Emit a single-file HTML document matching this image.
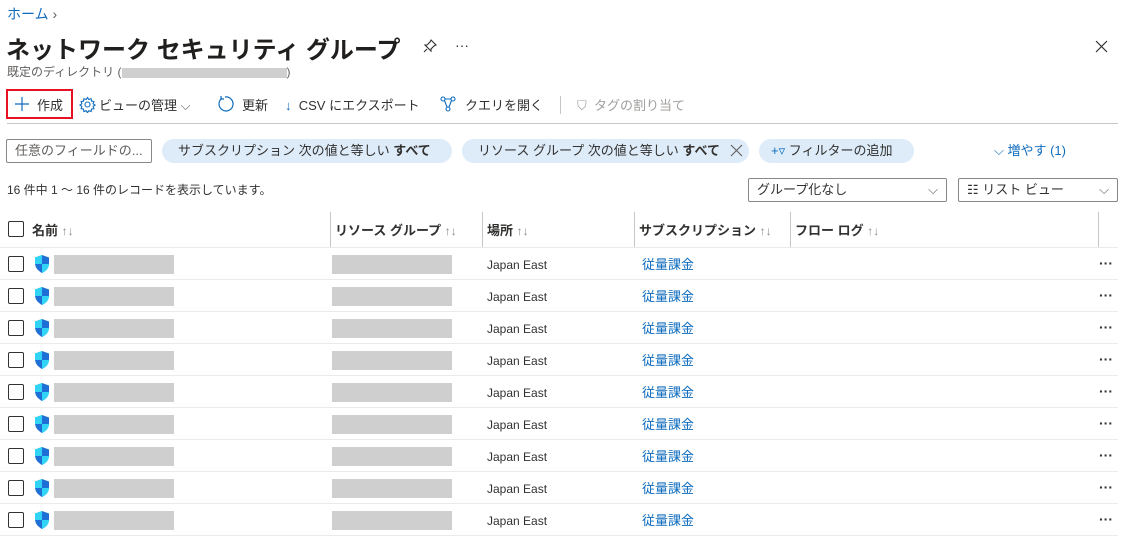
<!DOCTYPE html><html><head><meta charset="utf-8"><style>
*{box-sizing:border-box;margin:0;padding:0}
body{width:1126px;height:545px;overflow:hidden;background:#fff;font-family:"Liberation Sans","Noto Sans CJK JP",sans-serif;color:#323130;position:relative;font-size:13px}
.a{position:absolute;white-space:nowrap}
.blue{color:#0f6cbd}
.pill{position:absolute;height:24px;top:139px;background:#deecf9;border-radius:12px;font-size:13px;line-height:24px;padding:0 16px;white-space:nowrap}
.cb{position:absolute;width:16px;height:16px;border:1px solid #323130;border-radius:2px;left:8px}
.gray{position:absolute;background:#cfcfcf;height:19px;width:120px}
.hl{position:absolute;left:0;width:1118px;height:1px;background:#edebe9}
.vl{position:absolute;top:212px;width:1px;height:35px;background:#c8c6c4}
.h{font-weight:bold}
.sort{color:#8a8886;font-weight:normal;font-size:12px}
</style></head><body>
<div class="a blue" style="left:7px;top:4px;font-size:14px">ホーム <span style="color:#605e5c">›</span></div>
<div class="a" style="left:6px;top:30px;font-size:24px;font-weight:bold;color:#201f1e">ネットワーク セキュリティ グループ</div>
<div class="a" style="left:422px;top:38px">
<svg width="16" height="16" viewBox="0 0 16 16" fill="none" stroke="#323130" stroke-width="1.1"><path d="M9 2l5 5-2 1-3 3 0 2-6-6 2 0 3-3z M5 11l-3 3"/></svg></div>
<div class="a" style="left:455px;top:37px;font-size:14px">···</div>
<svg class="a" style="left:1095px;top:40px" width="13" height="13" viewBox="0 0 13 13" stroke="#323130" stroke-width="1.2"><path d="M1 1l11 11M12 1L1 12"/></svg>
<div class="a" style="left:7px;top:63px;font-size:12px;color:#605e5c">既定のディレクトリ (<span style="display:inline-block;width:165px;height:10px;background:#cfcfcf;vertical-align:middle"></span>)</div>
<div class="a" style="left:6px;top:89px;width:67px;height:30px;border:2px solid #e81123"></div>
<svg class="a" style="left:14px;top:96px" width="16" height="16" viewBox="0 0 16 16" stroke="#0f6cbd" stroke-width="1.2"><path d="M8 1v14M1 8h14"/></svg>
<div class="a" style="left:37px;top:95px;font-size:13px">作成</div>
<svg class="a" style="left:79px;top:96px" width="17" height="17" viewBox="0 0 17 17" fill="none" stroke="#0f6cbd" stroke-width="1.1"><circle cx="8.5" cy="8.5" r="2.5"/><path d="M8.5 1.5l1.3 2 2.3-.8.4 2.4 2.4.4-.8 2.3 2 1.3-2 1.3.8 2.3-2.4.4-.4 2.4-2.3-.8-1.3 2-1.3-2-2.3.8-.4-2.4-2.4-.4.8-2.3-2-1.3 2-1.3-.8-2.3 2.4-.4.4-2.4 2.3.8z"/></svg>
<div class="a" style="left:99px;top:95px;font-size:13px">ビューの管理 <span style="color:#605e5c">⌵</span></div>
<svg class="a" style="left:216px;top:95px" width="18" height="18" viewBox="0 0 18 18" fill="none" stroke="#0f6cbd" stroke-width="1.2"><path d="M6 3.2A7 7 0 1 0 9 2"/><path d="M5 1v3h3"/></svg>
<div class="a" style="left:242px;top:95px;font-size:13px">更新</div>
<div class="a" style="left:285px;top:95px;font-size:13px"><span class="blue">↓</span>&nbsp; CSV にエクスポート</div>
<svg class="a" style="left:440px;top:96px" width="16" height="16" viewBox="0 0 16 16" fill="none" stroke="#0f6cbd" stroke-width="1.1"><circle cx="3" cy="3" r="2"/><circle cx="13" cy="3" r="2"/><circle cx="8" cy="13" r="2"/><path d="M4.5 4.5L7 11M11.5 4.5L9 11M5 3h6"/></svg>
<div class="a" style="left:465px;top:95px;font-size:13px">クエリを開く</div>
<div class="a" style="left:560px;top:96px;width:1px;height:18px;background:#c8c6c4"></div>
<div class="a" style="left:577px;top:95px;font-size:13px;color:#a19f9d">⛉ &nbsp;タグの割り当て</div>
<div class="a" style="left:7px;top:123px;width:1111px;height:1px;background:#c8c6c4"></div>
<div class="a" style="left:6px;top:139px;width:146px;height:24px;border:1px solid #8a8886;border-radius:2px;font-size:13px;line-height:22px;padding-left:8px;color:#605e5c">任意のフィールドの...</div>
<div class="pill" style="left:162px;width:290px">サブスクリプション 次の値と等しい <b>すべて</b></div>
<div class="pill" style="left:462px;width:287px">リソース グループ 次の値と等しい <b>すべて</b></div>
<svg class="a" style="left:730px;top:144px" width="13" height="13" viewBox="0 0 13 13" stroke="#605e5c" stroke-width="1.1"><path d="M1 1l11 11M12 1L1 12"/></svg>
<div class="pill" style="left:759px;width:155px;padding-left:12px"><span class="blue">+▿</span> フィルターの追加</div>
<div class="a blue" style="left:994px;top:140px;font-size:13px">⌵ 増やす (1)</div>
<div class="a" style="left:7px;top:181px;font-size:12px">16 件中 1 ～ 16 件のレコードを表示しています。</div>
<div class="a" style="left:748px;top:178px;width:199px;height:24px;border:1px solid #8a8886;border-radius:2px;line-height:22px;padding-left:8px;font-size:13px">グループ化なし<span style="position:absolute;right:8px;color:#605e5c">⌵</span></div>
<div class="a" style="left:958px;top:178px;width:160px;height:24px;border:1px solid #8a8886;border-radius:2px;line-height:22px;padding-left:8px;font-size:13px">☷ リスト ビュー<span style="position:absolute;right:8px;color:#605e5c">⌵</span></div>
<div class="cb" style="top:221px"></div>
<div class="a h" style="left:32px;top:220px">名前 <span class="sort">↑↓</span></div>
<div class="vl" style="left:330px"></div><div class="a h" style="left:335px;top:220px">リソース グループ <span class="sort">↑↓</span></div>
<div class="vl" style="left:482px"></div><div class="a h" style="left:487px;top:220px">場所 <span class="sort">↑↓</span></div>
<div class="vl" style="left:634px"></div><div class="a h" style="left:639px;top:220px">サブスクリプション <span class="sort">↑↓</span></div>
<div class="vl" style="left:790px"></div><div class="a h" style="left:795px;top:220px">フロー ログ <span class="sort">↑↓</span></div>
<div class="vl" style="left:1098px"></div>
<div class="hl" style="top:247px"></div>
<div id="rows"></div>
<script>
var h='';for(var i=0;i<9;i++){var t=248+i*32;
h+='<div class="cb" style="top:'+(t+8)+'px"></div>';
h+='<svg class="a" style="left:34px;top:'+(t+7)+'px" width="16" height="18" viewBox="0 0 16 18"><path d="M8 0L15 2.5V8c0 5-3.5 8-7 10C4.5 16 1 13 1 8V2.5z" fill="#1f6fd6"/><path d="M8 0V9H1V2.5z" fill="#32d4f5"/><path d="M8 9h7c0 4-3 7.5-7 9z" fill="#32d4f5"/></svg>';
h+='<div class="gray" style="left:54px;top:'+(t+7)+'px"></div><div class="gray" style="left:332px;top:'+(t+7)+'px"></div>';
h+='<div class="a" style="left:487px;top:'+(t+10)+'px;font-size:12px">Japan East</div>';
h+='<div class="a blue" style="left:642px;top:'+(t+6)+'px;font-size:13px">従量課金</div>';
h+='<div class="a" style="left:1099px;top:'+(t+7)+'px;font-size:14px;font-weight:bold">···</div>';
h+='<div class="hl" style="top:'+(t+31)+'px"></div>';}
document.getElementById('rows').innerHTML=h;
</script>
</body></html>
